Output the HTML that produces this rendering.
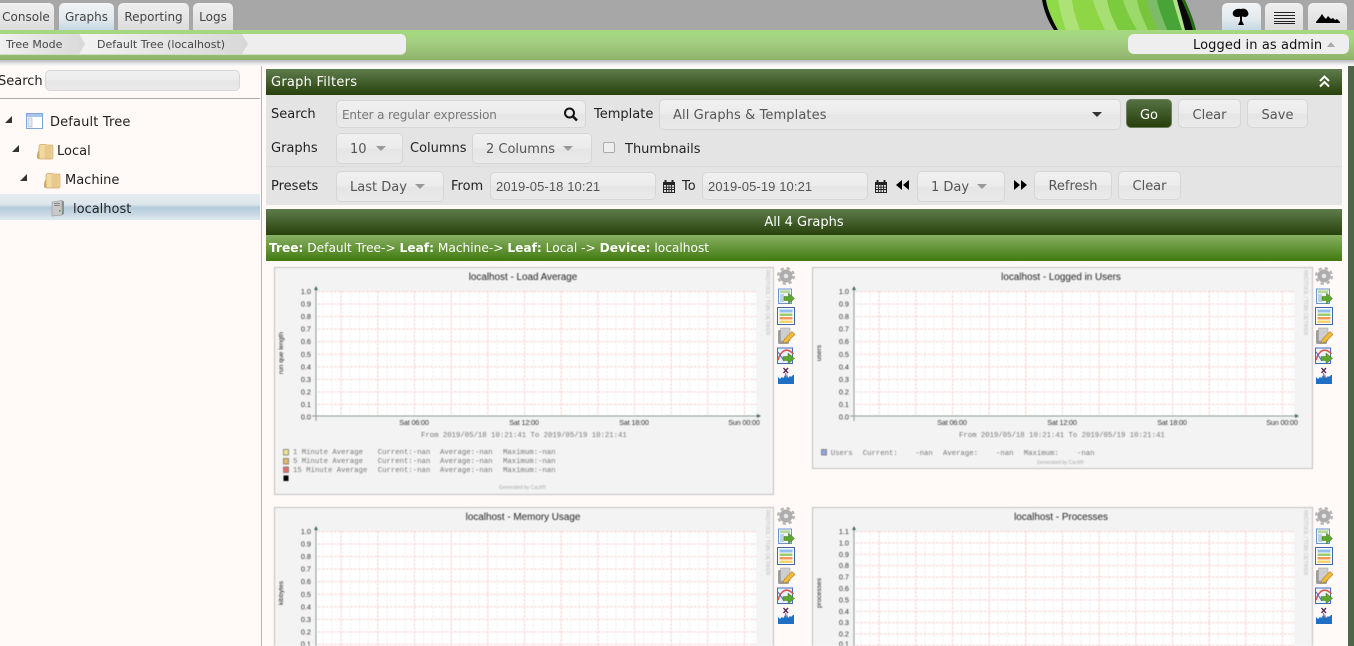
<!DOCTYPE html>
<html><head><meta charset="utf-8"><title>Graphs</title>
<style>
html,body{margin:0;padding:0;width:1354px;height:646px;overflow:hidden;background:#fffaf8;font-family:"DejaVu Sans","Liberation Sans",sans-serif;font-size:13px;color:#222}
.a{position:absolute}
.t{position:absolute;white-space:nowrap;line-height:16px;height:16px}
.tab{position:absolute;top:3px;height:27px;border-radius:5px 5px 0 0;background:linear-gradient(#f0f0f0,#e6e6e6 50%,#dcdcdc);font-size:12px;line-height:28px;text-align:center;color:#444;box-sizing:border-box}
.tab.on{background:linear-gradient(#f1f3f4,#e4ebef 55%,#c5d8e3)}
.box{position:absolute;box-sizing:border-box;border:1px solid #d6d6d6;border-radius:5px;background:linear-gradient(#f0f0f0,#ececec 48%,#e5e5e5 52%,#eaeaea);color:#555;white-space:nowrap;font-size:13px;text-align:center}
.l{text-align:left}
.hd{position:absolute;left:266px;width:1076px;height:26px;background:linear-gradient(#5f7c4c,#27410b);color:#fff}
.car{display:inline-block;width:0;height:0;border-left:5px solid transparent;border-right:5px solid transparent;border-top:5px solid #999;vertical-align:2px}
svg{position:absolute;overflow:hidden}
.c{filter:blur(.4px)}
.c text{font-family:"Liberation Sans",sans-serif;font-size:7.3px;fill:#333}
.c .ti{font-size:9.9px;text-anchor:middle;fill:#222}
.c .yl{text-anchor:end}
.c .xl{text-anchor:middle;font-size:7.2px;letter-spacing:-.15px}
.c .m{font-family:"Liberation Mono",monospace;font-size:7.3px;fill:#777}
.c .g{font-size:5px;fill:#aaa}
.c .r{font-size:5.2px;fill:#bcbcbc}
.c .y{font-size:6.6px;fill:#222;text-anchor:middle}
.ics{filter:blur(.3px)}
</style></head><body>

<svg width="0" height="0" style="position:absolute">
<defs>
<pattern id="vm" patternUnits="userSpaceOnUse" x="48.3" y="0" width="9.1667" height="4"><rect width="1" height="2.5" fill="#f2eded"/></pattern>
<pattern id="vM" patternUnits="userSpaceOnUse" x="66.7" y="0" width="36.667" height="4"><rect width="1" height="2.8" fill="#f8cfcf"/></pattern>
<pattern id="h1" patternUnits="userSpaceOnUse" x="0" y="24" width="4" height="12.55"><rect width="2.8" height="1" fill="#f9d0d0"/></pattern>
<pattern id="h2" patternUnits="userSpaceOnUse" x="0" y="35.4" width="4" height="11.4"><rect width="2.8" height="1" fill="#f9d0d0"/></pattern>
<symbol id="gear" viewBox="0 0 18 18"><circle cx="9" cy="9" r="6.500" fill="#adadad"/><circle cx="9" cy="9" r="7.800" fill="none" stroke="#b5b5b5" stroke-width="2.400" stroke-dasharray="3.200 3"/><circle cx="9" cy="9" r="2.300" fill="#e6e6e6"/></symbol>
<symbol id="prop" viewBox="0 0 18 18"><rect x="1.500" y="1" width="13" height="14.500" fill="#eef4fb" stroke="#6d94cc"/><rect x="3" y="2.500" width="10" height="2.500" fill="#b6d88f"/><path d="M3 7h4M3 9h4M3 11h4M3 13h4" stroke="#8fb0d8"/><path d="M7 8.500h4.500V5l6 5.500-6 5.500v-3.500H7z" fill="#5ea632" stroke="#3f7f1e" stroke-width=".5"/></symbol>
<symbol id="list" viewBox="0 0 18 18"><rect x=".5" y=".5" width="17" height="17" fill="#fff" stroke="#3e66a8"/><rect x="2.500" y="2.500" width="13" height="3" fill="#8fc0ee"/><rect x="2.500" y="6.500" width="13" height="2.500" fill="#9ccb6e"/><rect x="2.500" y="10" width="13" height="2.500" fill="#f19a55"/><rect x="2.500" y="13.500" width="13" height="2.500" fill="#f3d36b"/></symbol>
<symbol id="edit" viewBox="0 0 18 18"><rect x="1" y="3" width="11" height="14" rx="1.500" fill="#9c9c9c"/><rect x="3.500" y="1" width="9.500" height="13" fill="#cfcfcf" stroke="#999" stroke-width=".5"/><path d="M6 16l1.500-4L15 4.500l3 3-7.500 7.500z" fill="#f0b93c" stroke="#b5812a" stroke-width=".6"/></symbol>
<symbol id="zoom" viewBox="0 0 18 18"><rect x=".5" y="1" width="15" height="15.500" fill="#eaf2fb" stroke="#3e6fc2"/><path d="M1 13C4 3 10 0 16.500 7" fill="none" stroke="#d9574a" stroke-width="1.600"/><path d="M1 5l6 9" stroke="#3e6fc2"/><path d="M6 9.500h5V6l6.500 5.500L11 17v-3.500H6z" fill="#5ea632" stroke="#3f7f1e" stroke-width=".5"/></symbol>
<symbol id="mrtg" viewBox="0 0 18 18"><path d="M1 17V10l2 2 2-2 1.500 1 1.500-3 1 3 1-4 1 4 2-2 1 1 2-2 1 0v9z" fill="#1f6fc4"/><path d="M6.500 1l4.500 5M11 1L6.500 6" stroke="#5b2a55" stroke-width="1.400"/><path d="M8.700 6v5" stroke="#8a5c80"/></symbol>
<symbol id="fold" viewBox="0 0 18 18"><path d="M1 15.500C1 11 2 9 3 8v9H2z" fill="#c9a55f"/><path d="M3 5c0-2 1-2.500 2-2.500h4c2 0 0 1 7 .5 1 0 1 1 1 2v10c0 1.500-1 2-2 2H4c-1 0-1-1-1-2z" fill="#f1d9a1" stroke="#cda862" stroke-width=".7"/><path d="M8.500 4h7v12.500h-7z" fill="#e7c98b"/></symbol>
</defs>
</svg>

<!-- top grey -->
<div class="a" style="left:0;top:0;width:1354px;height:30px;background:#a7a7a7"></div>

<!-- logo -->
<svg style="left:1030px;top:0" width="180" height="31" viewBox="0 0 180 31">
<path d="M16 0L29 30H158L146 0z" fill="#8ed645"/>
<path d="M12 0H16C18 11 23 21 28 30H24C18 21 14 11 12 0z" fill="#050505"/>
<path d="M16 0H28C30 11 33 21 36 30H28C23 21 18 11 16 0z" fill="#8fda48"/>
<path d="M28 0H42C43 11 47 21 50 30H36C33 21 30 11 28 0z" fill="#aee277"/>
<path d="M63 0H77C79 11 84 21 88 30H75C71 21 66 11 63 0z" fill="#a8df74"/>
<path d="M77 0H93C96 11 102 21 107 30H88C84 21 79 11 77 0z" fill="#7ccb3f"/>
<path d="M93 0H107C109 11 114 21 118 30H107C102 21 96 11 93 0z" fill="#9bd96b"/>
<path d="M107 0H117C119 11 124 21 127 30H118C114 21 109 11 107 0z" fill="#78c53b"/>
<path d="M117 0H127C129 11 134 21 137 30H127C124 21 119 11 117 0z" fill="#7cbb68"/>
<path d="M127 0H143C146 11 149 21 152 30H137C134 21 129 11 127 0z" fill="#48a436"/>
<path d="M143 0H147C150 11 153 21 155 30H152C149 21 146 11 143 0z" fill="#b4e08d"/>
<path d="M147 0H152C157 11 161 21 163 30H155C153 21 150 11 147 0z" fill="#0a0a0a"/>
<path d="M152 0H155C160 11 164 21 166 30H163C161 21 157 11 152 0z" fill="#1f6d10"/>
</svg>

<!-- tabs -->
<div class="tab" style="left:-8px;width:62px;padding-left:6px">Console</div>
<div class="tab on" style="left:59px;width:55px">Graphs</div>
<div class="tab" style="left:118px;width:71px">Reporting</div>
<div class="tab" style="left:193px;width:40px">Logs</div>

<div class="tab on" style="left:1222px;width:39px"><svg style="left:9px;top:5px" width="20" height="18" viewBox="0 0 20 18"><path d="M10 1c3-1 6 .5 7 3 1.500 3-1 5-3 5-1 0-2-.5-3-.5V13l2 4H7l2-4V8.500C8 9 7 9 6 9 3 9 1 7 2 4c1-2 4-4 8-3z" fill="#000"/></svg></div>
<div class="tab" style="left:1265px;width:38px"><svg style="left:9px;top:9px" width="21" height="12" viewBox="0 0 21 12"><path d="M0 .5h21M0 3.500h21M0 6.500h21M0 9.500h21M0 11.500h21" stroke="#222" stroke-width="1"/></svg></div>
<div class="tab" style="left:1308px;width:39px"><svg style="left:8px;top:9px" width="24" height="12" viewBox="0 0 24 12"><path d="M0 10L4 5l2-3 2 3 2 2 2-3 3 3 2-1 2 2 2-1 3 3v1H0z" fill="#000"/></svg></div>

<!-- green bar -->
<div class="a" style="left:0;top:30px;width:1354px;height:30px;background:linear-gradient(#a6d981,#a3d07f 40%,#8fb16b)"></div>
<div class="a" style="left:0;top:60px;width:1354px;height:6px;background:linear-gradient(#b9b9b9,#ececec 70%,#fffaf8)"></div>
<div class="a" style="left:0;top:34px;width:406px;height:20px;background:#eee;border-radius:0 5px 5px 0;box-shadow:0 1px 0 #cfe0bd"></div>
<div class="a" style="left:0;top:34px;width:85px;height:20px;background:linear-gradient(90deg,#f0f0f0,#d9d9d9);clip-path:polygon(0 0,79px 0,85px 50%,79px 100%,0 100%)"></div>
<div class="a" style="left:80px;top:34px;width:168px;height:20px;background:linear-gradient(90deg,#f2f2f2,#d8d8d8);clip-path:polygon(0 0,162px 0,168px 50%,162px 100%,0 100%,6px 50%)"></div>
<div class="t" style="left:6px;top:37px;font-size:11px;color:#444">Tree Mode</div>
<div class="t" style="left:97px;top:37px;font-size:11px;color:#444">Default Tree (localhost)</div>
<div class="a" style="left:1128px;top:34px;width:221px;height:20px;background:#eee;border-radius:6px"></div>
<div class="t" style="left:1193px;top:38px;font-size:13px;color:#111;letter-spacing:.1px">Logged in as admin</div>
<div class="a" style="left:1327px;top:42px;width:0;height:0;border-left:4px solid transparent;border-right:4px solid transparent;border-bottom:5px solid #aaa"></div>

<!-- left panel -->
<div class="t" style="left:-2px;top:74px">Search</div>
<div class="box" style="left:45px;top:70px;width:195px;height:21px"></div>
<div class="a" style="left:0;top:98px;width:260px;height:1px;background:#aaa"></div>
<div class="a" style="left:261px;top:66px;width:1px;height:580px;background:#b5b5b5"></div>

<div class="a" style="left:5px;top:116px;width:0;height:0;border-left:7px solid transparent;border-bottom:7px solid #333"></div>
<div class="a" style="left:12px;top:145px;width:0;height:0;border-left:7px solid transparent;border-bottom:7px solid #333"></div>
<div class="a" style="left:20px;top:174px;width:0;height:0;border-left:7px solid transparent;border-bottom:7px solid #333"></div>

<svg style="left:26px;top:113px" width="17" height="16" viewBox="0 0 17 16"><rect x=".5" y=".5" width="16" height="15" fill="#fff" stroke="#7fa6d6"/><rect x="1" y="1" width="15" height="3" fill="#a8c6ea"/><rect x="2" y="5" width="4" height="9" fill="#dfe9f5" stroke="#9ab" stroke-width=".5"/></svg>
<div class="t" style="left:50px;top:115px;letter-spacing:.15px">Default Tree</div>
<svg style="left:36px;top:142px" width="18" height="18"><use href="#fold" width="18" height="18"/></svg>
<div class="t" style="left:57px;top:144px">Local</div>
<svg style="left:43px;top:171px" width="18" height="18"><use href="#fold" width="18" height="18"/></svg>
<div class="t" style="left:65px;top:173px">Machine</div>
<div class="a" style="left:0;top:194px;width:260px;height:26px;background:linear-gradient(#e6edf1,#dce6ec 40%,#b4cbdb 52%,#c6d7e3 75%,#dfe8ee)"></div>
<svg style="left:50px;top:200px" width="15" height="17" viewBox="0 0 15 17"><path d="M2 2l10-1.500V15l-10 1z" fill="#c9c9c9" stroke="#999" stroke-width=".6"/><path d="M12 .5l2 1V14l-2 1z" fill="#8f8f8f"/><path d="M4 3.500h6M4 5.500h6" stroke="#888"/><rect x="9" y="10" width="1.500" height="1.500" fill="#3a3"/></svg>
<div class="t" style="left:73px;top:202px">localhost</div>

<!-- right scrollbar-ish -->
<div class="a" style="left:1348px;top:66px;width:6px;height:580px;background:#4f6445"></div>

<!-- filter panel -->
<div class="hd" style="top:69px"></div>
<div class="t" style="left:271px;top:75px;color:#fff;letter-spacing:.25px">Graph Filters</div>
<svg style="left:1319px;top:75px" width="11" height="13" viewBox="0 0 11 13"><path d="M1 6l4.500-4.500L10 6M1 11.500L5.500 7 10 11.500" fill="none" stroke="#fff" stroke-width="2"/></svg>
<div class="a" style="left:266px;top:95px;width:1076px;height:110px;background:#e4e4e4"></div>
<div class="a" style="left:266px;top:166px;width:1076px;height:1px;background:#dadada"></div>

<div class="t" style="left:271px;top:107px">Search</div>
<div class="box l" style="left:336px;top:100px;width:250px;height:28px;line-height:29px;padding-left:5px;color:#777;font-size:12px;letter-spacing:-.15px">Enter a regular expression</div>
<svg style="left:563px;top:107px" width="16" height="15" viewBox="0 0 16 15"><circle cx="6.500" cy="6" r="4.500" fill="none" stroke="#111" stroke-width="2"/><path d="M10 9.500l4 4" stroke="#111" stroke-width="2.500"/></svg>
<div class="t" style="left:594px;top:107px">Template</div>
<div class="box l" style="left:659px;top:99px;width:462px;height:31px;line-height:32px;padding-left:13px;letter-spacing:.1px">All Graphs &amp; Templates</div>
<div class="a" style="left:1092px;top:112px;width:0;height:0;border-left:5px solid transparent;border-right:5px solid transparent;border-top:5px solid #333"></div>
<div class="box" style="left:1126px;top:99px;width:46px;height:29px;line-height:31px;background:linear-gradient(#557042,#263f0b);border-color:#6b7f5c;color:#fff">Go</div>
<div class="box" style="left:1178px;top:99px;width:63px;height:29px;line-height:31px">Clear</div>
<div class="box" style="left:1247px;top:99px;width:61px;height:29px;line-height:31px">Save</div>

<div class="t" style="left:271px;top:141px">Graphs</div>
<div class="box l" style="left:336px;top:133px;width:67px;height:31px;line-height:32px;padding-left:13px">10 &nbsp;<span class="car" style="margin-left:1px"></span></div>
<div class="t" style="left:410px;top:141px">Columns</div>
<div class="box l" style="left:472px;top:133px;width:120px;height:31px;line-height:32px;padding-left:13px">2 Columns &nbsp;<span class="car"></span></div>
<div class="a" style="left:603px;top:142px;width:12px;height:11px;box-sizing:border-box;border:1px solid #aaa;border-radius:2px;background:#eee"></div>
<div class="t" style="left:625px;top:142px">Thumbnails</div>

<div class="t" style="left:271px;top:179px">Presets</div>
<div class="box l" style="left:336px;top:171px;width:108px;height:31px;line-height:32px;padding-left:13px">Last Day &nbsp;<span class="car"></span></div>
<div class="t" style="left:451px;top:179px">From</div>
<div class="box l" style="left:490px;top:172px;width:166px;height:28px;line-height:27px;padding-left:5px;font-family:'Liberation Sans',sans-serif;font-size:13px;letter-spacing:.1px">2019-05-18 10:21</div>
<svg style="left:663px;top:179px" width="12" height="14" viewBox="0 0 12 14"><path d="M0 3h12v11H0z" fill="#222"/><path d="M2.500 1v3M9.500 1v3" stroke="#222" stroke-width="2"/><path d="M1 6h10v7H1z" fill="#ddd"/><path d="M1 8.200h10M1 10.500h10M3.500 6v7M6 6v7M8.500 6v7" stroke="#222" stroke-width=".9"/></svg>
<div class="t" style="left:682px;top:179px">To</div>
<div class="box l" style="left:702px;top:172px;width:166px;height:28px;line-height:27px;padding-left:5px;font-family:'Liberation Sans',sans-serif;font-size:13px;letter-spacing:.1px">2019-05-19 10:21</div>
<svg style="left:875px;top:179px" width="12" height="14" viewBox="0 0 12 14"><path d="M0 3h12v11H0z" fill="#222"/><path d="M2.500 1v3M9.500 1v3" stroke="#222" stroke-width="2"/><path d="M1 6h10v7H1z" fill="#ddd"/><path d="M1 8.200h10M1 10.500h10M3.500 6v7M6 6v7M8.500 6v7" stroke="#222" stroke-width=".9"/></svg>
<svg style="left:895px;top:179px" width="15" height="12" viewBox="0 0 15 12"><path d="M7 1v10L1 6zM14 1v10L8 6z" fill="#000"/></svg>
<div class="box l" style="left:917px;top:171px;width:88px;height:31px;line-height:32px;padding-left:13px">1 Day &nbsp;<span class="car"></span></div>
<svg style="left:1013px;top:179px" width="15" height="12" viewBox="0 0 15 12"><path d="M1 1v10L7 6zM8 1v10L14 6z" fill="#000"/></svg>
<div class="box" style="left:1034px;top:171px;width:78px;height:29px;line-height:30px">Refresh</div>
<div class="box" style="left:1118px;top:171px;width:63px;height:29px;line-height:30px">Clear</div>

<!-- graphs headers -->
<div class="hd" style="top:209px;text-align:center;line-height:28px">All 4 Graphs</div>
<div class="a" style="left:266px;top:235px;width:1076px;height:26px;background:linear-gradient(#88b063,#417a0f)"></div>
<div class="t" style="left:269px;top:240px;color:#fff;font-size:12.2px;line-height:17px"><b>Tree:</b> Default Tree-&gt; <b>Leaf:</b> Machine-&gt; <b>Leaf:</b> Local -&gt; <b>Device:</b> localhost</div>

<!-- chart 1 -->
<svg class="c" style="left:274px;top:267px" width="500" height="228" viewBox="0 0 500 228">
<rect x=".5" y=".5" width="499" height="227" fill="#f3f3f3" stroke="#c0c0c0"/>
<rect x="42" y="24" width="440" height="125" fill="#fff"/><rect x="42" y="24" width="440" height="125" fill="url(#vm)"/><rect x="42" y="24" width="440" height="125" fill="url(#vM)"/><rect x="42" y="24" width="440" height="125" fill="url(#h1)"/>
<path d="M42 20v134M38 149h448" stroke="#8a9a92" fill="none"/><path d="M40 23l2-4 2 4zM483 147l4 2-4 2z" fill="#3b6b55"/>
<text class="ti" x="249" y="13">localhost - Load Average</text>
<text class="yl" x="37" y="27">1.0</text><text class="yl" x="37" y="39.500">0.9</text><text class="yl" x="37" y="52">0.8</text><text class="yl" x="37" y="64.700">0.7</text><text class="yl" x="37" y="77.200">0.6</text><text class="yl" x="37" y="89.800">0.5</text><text class="yl" x="37" y="102.300">0.4</text><text class="yl" x="37" y="114.900">0.3</text><text class="yl" x="37" y="127.400">0.2</text><text class="yl" x="37" y="140">0.1</text><text class="yl" x="37" y="152.500">0.0</text>
<text class="xl" x="140" y="158">Sat 06:00</text><text class="xl" x="250" y="158">Sat 12:00</text><text class="xl" x="360" y="158">Sat 18:00</text><text class="xl" x="470" y="158">Sun 00:00</text>
<text class="m" x="147" y="170">From 2019/05/18 10:21:41 To 2019/05/19 10:21:41</text>
<text class="y" transform="translate(9 86) rotate(-90)">run que length</text>
<text class="r" transform="translate(492 3) rotate(90)">RRDTOOL / TOBI OETIKER</text>
<rect x="9.500" y="182.500" width="5" height="5.500" fill="#f0e68c" stroke="#666" stroke-width=".7"/><rect x="9.500" y="191.500" width="5" height="5.500" fill="#e9b965" stroke="#666" stroke-width=".7"/><rect x="9.500" y="200" width="5" height="5.500" fill="#ee6a6a" stroke="#666" stroke-width=".7"/><rect x="9.500" y="208.500" width="5" height="5.500" fill="#000"/>
<text class="m" x="19" y="187">1 Minute Average</text><text class="m" x="103.700" y="187">Current:-nan</text><text class="m" x="166" y="187">Average:-nan</text><text class="m" x="229" y="187">Maximum:-nan</text>
<text class="m" x="19" y="196">5 Minute Average</text><text class="m" x="103.700" y="196">Current:-nan</text><text class="m" x="166" y="196">Average:-nan</text><text class="m" x="229" y="196">Maximum:-nan</text>
<text class="m" x="19" y="205">15 Minute Average</text><text class="m" x="103.700" y="205">Current:-nan</text><text class="m" x="166" y="205">Average:-nan</text><text class="m" x="229" y="205">Maximum:-nan</text>
<text class="g" x="225" y="222">Generated by Cacti®</text>
</svg>

<!-- chart 2 -->
<svg class="c" style="left:812px;top:267px" width="501" height="202" viewBox="0 0 501 202">
<rect x=".5" y=".5" width="500" height="201" fill="#f3f3f3" stroke="#c0c0c0"/>
<rect x="42" y="24" width="440" height="125" fill="#fff"/><rect x="42" y="24" width="440" height="125" fill="url(#vm)"/><rect x="42" y="24" width="440" height="125" fill="url(#vM)"/><rect x="42" y="24" width="440" height="125" fill="url(#h1)"/>
<path d="M42 20v134M38 149h448" stroke="#8a9a92" fill="none"/><path d="M40 23l2-4 2 4zM483 147l4 2-4 2z" fill="#3b6b55"/>
<text class="ti" x="249" y="13">localhost - Logged in Users</text>
<text class="yl" x="37" y="27">1.0</text><text class="yl" x="37" y="39.500">0.9</text><text class="yl" x="37" y="52">0.8</text><text class="yl" x="37" y="64.700">0.7</text><text class="yl" x="37" y="77.200">0.6</text><text class="yl" x="37" y="89.800">0.5</text><text class="yl" x="37" y="102.300">0.4</text><text class="yl" x="37" y="114.900">0.3</text><text class="yl" x="37" y="127.400">0.2</text><text class="yl" x="37" y="140">0.1</text><text class="yl" x="37" y="152.500">0.0</text>
<text class="xl" x="140" y="158">Sat 06:00</text><text class="xl" x="250" y="158">Sat 12:00</text><text class="xl" x="360" y="158">Sat 18:00</text><text class="xl" x="470" y="158">Sun 00:00</text>
<text class="m" x="147" y="170">From 2019/05/18 10:21:41 To 2019/05/19 10:21:41</text>
<text class="y" transform="translate(9 86) rotate(-90)">users</text>
<text class="r" transform="translate(492 3) rotate(90)">RRDTOOL / TOBI OETIKER</text>
<rect x="9.500" y="182.500" width="5" height="5.500" fill="#8fa8e0" stroke="#666" stroke-width=".7"/>
<text class="m" x="18.700" y="188">Users</text><text class="m" x="50.700" y="188">Current:</text><text class="m" x="103.300" y="188">-nan</text><text class="m" x="131" y="188">Average:</text><text class="m" x="184" y="188">-nan</text><text class="m" x="211.700" y="188">Maximum:</text><text class="m" x="265" y="188">-nan</text>
<text class="g" x="225" y="197">Generated by Cacti®</text>
</svg>

<!-- chart 3 -->
<svg class="c" style="left:274px;top:507px" width="500" height="139" viewBox="0 0 500 139">
<rect x="0" y="0" width="500" height="139" fill="#f3f3f3"/>
<path d="M.5 139V.5H499.500V139" fill="none" stroke="#c0c0c0"/>
<rect x="42" y="24" width="440" height="115" fill="#fff"/><rect x="42" y="24" width="440" height="115" fill="url(#vm)"/><rect x="42" y="24" width="440" height="115" fill="url(#vM)"/><rect x="42" y="24" width="440" height="115" fill="url(#h1)"/>
<path d="M42 20v119" stroke="#8a9a92" fill="none"/><path d="M40 23l2-4 2 4z" fill="#3b6b55"/>
<text class="ti" x="249" y="13">localhost - Memory Usage</text>
<text class="yl" x="37" y="27">1.0</text><text class="yl" x="37" y="39.500">0.9</text><text class="yl" x="37" y="52">0.8</text><text class="yl" x="37" y="64.700">0.7</text><text class="yl" x="37" y="77.200">0.6</text><text class="yl" x="37" y="89.800">0.5</text><text class="yl" x="37" y="102.300">0.4</text><text class="yl" x="37" y="114.900">0.3</text><text class="yl" x="37" y="127.400">0.2</text><text class="yl" x="37" y="139.500">0.1</text>
<text class="y" transform="translate(9 86) rotate(-90)">kibbytes</text>
<text class="r" transform="translate(492 3) rotate(90)">RRDTOOL / TOBI OETIKER</text>
</svg>

<!-- chart 4 -->
<svg class="c" style="left:812px;top:507px" width="501" height="139" viewBox="0 0 501 139">
<rect x="0" y="0" width="501" height="139" fill="#f3f3f3"/>
<path d="M.5 139V.5H500.500V139" fill="none" stroke="#c0c0c0"/>
<rect x="42" y="24" width="440" height="115" fill="#fff"/><rect x="42" y="24" width="440" height="115" fill="url(#vm)"/><rect x="42" y="24" width="440" height="115" fill="url(#vM)"/><rect x="42" y="24" width="440" height="115" fill="url(#h2)"/>
<path d="M42 20v119" stroke="#8a9a92" fill="none"/><path d="M40 23l2-4 2 4z" fill="#3b6b55"/>
<text class="ti" x="249" y="13">localhost - Processes</text>
<text class="yl" x="37" y="27">1.1</text><text class="yl" x="37" y="38.400">1.0</text><text class="yl" x="37" y="49.800">0.9</text><text class="yl" x="37" y="61.200">0.8</text><text class="yl" x="37" y="72.600">0.7</text><text class="yl" x="37" y="84">0.6</text><text class="yl" x="37" y="95.400">0.5</text><text class="yl" x="37" y="106.800">0.4</text><text class="yl" x="37" y="118.200">0.3</text><text class="yl" x="37" y="129.600">0.2</text><text class="yl" x="37" y="139.500">0.1</text>
<text class="y" transform="translate(9 86) rotate(-90)">processes</text>
<text class="r" transform="translate(492 3) rotate(90)">RRDTOOL / TOBI OETIKER</text>
</svg>

<!-- action icons -->
<svg class="ics" style="left:777px;top:267px" width="19" height="120"><use href="#gear" y="0" width="18" height="18"/><use href="#prop" y="21" width="18" height="18"/><use href="#list" y="40" width="18" height="18"/><use href="#edit" y="60" width="18" height="18"/><use href="#zoom" y="80" width="18" height="18"/><use href="#mrtg" y="100" width="18" height="18"/></svg>
<svg class="ics" style="left:1315px;top:267px" width="19" height="120"><use href="#gear" y="0" width="18" height="18"/><use href="#prop" y="21" width="18" height="18"/><use href="#list" y="40" width="18" height="18"/><use href="#edit" y="60" width="18" height="18"/><use href="#zoom" y="80" width="18" height="18"/><use href="#mrtg" y="100" width="18" height="18"/></svg>
<svg class="ics" style="left:777px;top:507px" width="19" height="120"><use href="#gear" y="0" width="18" height="18"/><use href="#prop" y="21" width="18" height="18"/><use href="#list" y="40" width="18" height="18"/><use href="#edit" y="60" width="18" height="18"/><use href="#zoom" y="80" width="18" height="18"/><use href="#mrtg" y="100" width="18" height="18"/></svg>
<svg class="ics" style="left:1315px;top:507px" width="19" height="120"><use href="#gear" y="0" width="18" height="18"/><use href="#prop" y="21" width="18" height="18"/><use href="#list" y="40" width="18" height="18"/><use href="#edit" y="60" width="18" height="18"/><use href="#zoom" y="80" width="18" height="18"/><use href="#mrtg" y="100" width="18" height="18"/></svg>

</body></html>
